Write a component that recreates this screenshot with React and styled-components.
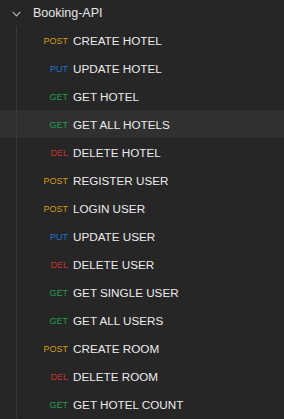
import React from 'react';
import styled, { createGlobalStyle } from 'styled-components';

const GlobalStyle = createGlobalStyle`
  html, body {
    margin: 0;
    padding: 0;
    background: #262626;
  }
  body {
    font-family: "Liberation Sans", Arial, sans-serif;
  }
`;

const requests = [
  { method: 'POST', name: 'CREATE HOTEL' },
  { method: 'PUT', name: 'UPDATE HOTEL' },
  { method: 'GET', name: 'GET HOTEL' },
  { method: 'GET', name: 'GET ALL HOTELS', active: true },
  { method: 'DEL', name: 'DELETE HOTEL' },
  { method: 'POST', name: 'REGISTER USER' },
  { method: 'POST', name: 'LOGIN USER' },
  { method: 'PUT', name: 'UPDATE USER' },
  { method: 'DEL', name: 'DELETE USER' },
  { method: 'GET', name: 'GET SINGLE USER' },
  { method: 'GET', name: 'GET ALL USERS' },
  { method: 'POST', name: 'CREATE ROOM' },
  { method: 'DEL', name: 'DELETE ROOM' },
  { method: 'GET', name: 'GET HOTEL COUNT' },
];

const methodColors = {
  GET: '#1f9d4f',
  POST: '#d39b12',
  PUT: '#1f6fd4',
  DEL: '#c8302b',
};

const Sidebar = styled.div`
  width: 284px;
  height: 419px;
  background: #262626;
  overflow: hidden;
`;

const FolderHeader = styled.div`
  display: flex;
  align-items: center;
  height: 26px;
  padding-left: 12px;
  gap: 12px;
  color: #e6e6e6;
  font-size: 12.5px;
`;

const Chevron = styled.svg`
  width: 9px;
  height: 6px;
  margin-top: 1px;
  flex-shrink: 0;
`;

const RequestList = styled.div`
  display: flex;
  flex-direction: column;
`;

const RequestRow = styled.div`
  position: relative;
  display: flex;
  align-items: center;
  height: 28px;
  padding-top: 1px;
  box-sizing: border-box;
  gap: 5px;
  background: ${(p) => (p.$active ? '#303030' : 'transparent')};

  &::before {
    content: '';
    position: absolute;
    left: 16px;
    top: 0;
    bottom: 0;
    width: 1px;
    background: #383838;
  }
`;

const Method = styled.span`
  width: 68px;
  text-align: right;
  font-size: 9px;
  color: ${(p) => methodColors[p.$method]};
  padding-top: 1px;
`;

const RequestName = styled.span`
  color: #ececec;
  font-size: 11.7px;
`;

export default function App() {
  return (
    <>
      <GlobalStyle />
      <Sidebar>
        <FolderHeader>
          <Chevron viewBox="0 0 9 6" fill="none" stroke="#bdbdbd" strokeWidth="1.1" strokeLinecap="round" strokeLinejoin="round">
            <path d="M1 1.2 L4.5 4.8 L8 1.2" />
          </Chevron>
          <span>Booking-API</span>
        </FolderHeader>
        <RequestList>
          {requests.map((r) => (
            <RequestRow key={r.name} $active={r.active}>
              <Method $method={r.method}>{r.method}</Method>
              <RequestName>{r.name}</RequestName>
            </RequestRow>
          ))}
        </RequestList>
      </Sidebar>
    </>
  );
}
